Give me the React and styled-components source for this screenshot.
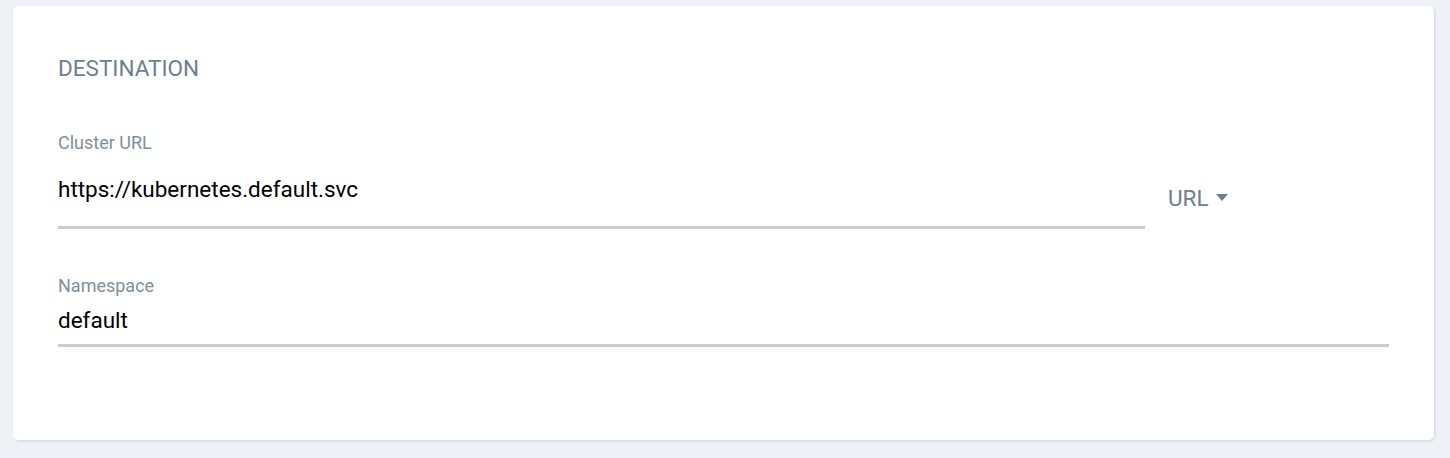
import styled, { createGlobalStyle } from 'styled-components';

const GlobalStyle = createGlobalStyle`
    html, body {
        margin: 0;
        padding: 0;
        background: #eef1f5;
        font-family: Roboto, "Liberation Sans", Arial, sans-serif;
    }
    * {
        box-sizing: border-box;
    }
`;

const Page = styled.div`
    padding: 6px 16px 18px 13px;
    height: 458px;
`;

const Card = styled.div`
    background: #fff;
    border-radius: 5px;
    box-shadow: 1px 1px 3px rgba(0, 0, 0, 0.12);
    height: 434px;
    padding: 49px 45px 0 45px;
`;

const Heading = styled.h4`
    margin: 0;
    font-size: 22.5px;
    line-height: 27px;
    font-weight: 400;
    color: #6d7f8b;
    text-transform: uppercase;
`;

const Row = styled.div`
    display: grid;
    grid-template-columns: 1fr 244px;
    margin-top: ${(p) => p.$top || 0}px;
`;

const Field = styled.div`
    display: flex;
    flex-direction: column;
    margin-top: ${(p) => p.$top || 0}px;
`;

const Label = styled.label`
    font-size: 18px;
    line-height: 22px;
    color: #7f8f9a;
`;

const Input = styled.div`
    font-size: 22.5px;
    line-height: 27px;
    color: #000;
    padding: ${(p) => (p.$tall ? '22px 0 23px' : '10px 0 10px')};
    border-bottom: 3px solid #cccccc;
`;

const Select = styled.div`
    display: flex;
    align-items: center;
    gap: 7px;
    padding: 53px 0 0 23px;
    font-size: 22.5px;
    line-height: 27px;
    color: #6d7f8b;
    align-self: start;
`;

const Caret = styled.span`
    width: 0;
    height: 0;
    border-left: 6.5px solid transparent;
    border-right: 6.5px solid transparent;
    border-top: 7px solid #6d7f8b;
    margin-top: -2px;
`;

export default function App() {
    return (
        <Page>
            <GlobalStyle />
            <Card>
                <Heading>Destination</Heading>
                <Row $top={50}>
                    <Field>
                        <Label>Cluster URL</Label>
                        <Input $tall>https://kubernetes.default.svc</Input>
                    </Field>
                    <Select>
                        URL
                        <Caret />
                    </Select>
                </Row>
                <Field $top={46}>
                    <Label>Namespace</Label>
                    <Input>default</Input>
                </Field>
            </Card>
        </Page>
    );
}
